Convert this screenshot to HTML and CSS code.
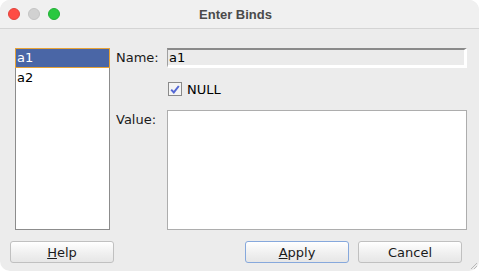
FILE: index.html
```html
<!DOCTYPE html>
<html>
    <head>
        <title>Enter Binds</title>
        <link rel="stylesheet" href="styles.css">
    </head>

    <body>

        <div class="window">

            <div class="titlebar">
                <div class="lights">
                    <span class="light red"></span>
                    <span class="light gray"></span>
                    <span class="light green"></span>
                </div>
                <div class="title">Enter Binds</div>
            </div>

            <div class="content">

                <div class="bind_list">
                    <div class="bind_item selected">a1</div>
                    <div class="bind_item">a2</div>
                </div>

                <div class="bind_form">

                    <label class="form_label name_label" for="name_input">Name:</label>
                    <div class="name_field" id="name_input">a1</div>

                    <div></div>
                    <div class="null_row">
                        <span class="checkbox">
                            <svg width="10" height="9" viewBox="0 0 10 9"><path d="M1.2 4.6 L3.8 7.4 L8.8 1" fill="none" stroke="#5468d4" stroke-width="2"/></svg>
                        </span>
                        <span class="null_text">NULL</span>
                    </div>

                    <label class="form_label value_label" for="value_input">Value:</label>
                    <div class="value_field" id="value_input"></div>

                </div>

            </div>

            <div class="buttons">
                <button type="button" class="btn"><u>H</u>elp</button>
                <div class="spacer"></div>
                <button type="button" class="btn default"><u>A</u>pply</button>
                <button type="button" class="btn">Cancel</button>
            </div>

            <svg class="grip" width="10" height="10" viewBox="0 0 10 10"><path d="M9 3 L3 9 M9 6 L6 9" stroke="#b8b8b8" stroke-width="1"/></svg>

        </div>

    </body>
</html>
```

FILE: styles.css
```css
html, body {
    margin: 0;
    padding: 0;
    background-color: #ffffff;
}

.window {
    position: relative;
    width: 479px;
    height: 271px;
    background-color: #ececec;
    border-radius: 10px;
    overflow: hidden;
    display: flex;
    flex-direction: column;
    font-family: "DejaVu Sans", sans-serif;
    font-size: 13px;
    color: #1a1a1a;
}

.titlebar {
    height: 28px;
    background-color: #f0f0f0;
    border-bottom: 1px solid #d4d4d4;
    display: flex;
    align-items: center;
    position: relative;
}

.lights {
    display: flex;
    gap: 8px;
    padding-left: 8px;
}

.light {
    width: 12px;
    height: 12px;
    border-radius: 50%;
    box-sizing: border-box;
}

.red {
    background-color: #fe4c44;
    border: 1px solid #e0443c;
}

.gray {
    background-color: #d1d1d1;
    border: 1px solid #c4c4c4;
}

.green {
    background-color: #29c840;
    border: 1px solid #22b035;
}

.title {
    flex: 1;
    text-align: center;
    margin-right: 68px;
    font-family: "Liberation Sans", Arial, sans-serif;
    font-weight: bold;
    font-size: 13px;
    color: #4a4a4a;
}

.content {
    display: flex;
    padding: 19px 12px 0 15px;
}

.bind_list {
    width: 95px;
    height: 182px;
    box-sizing: border-box;
    background-color: #ffffff;
    border: 1px solid #8c8c8c;
    margin-right: 6px;
}

.bind_item {
    height: 19px;
    line-height: 19px;
    padding-left: 1px;
    color: #000000;
}

.bind_item.selected {
    height: 18px;
    line-height: 18px;
    background-color: #4a66a6;
    color: #ffffff;
    border: 1px solid #e6a236;
    margin: -1px -1px 0 -1px;
    padding-left: 1px;
}

.bind_form {
    flex: 1;
    display: grid;
    grid-template-columns: 51px 1fr;
    grid-template-rows: 20px 29px 120px;
    row-gap: 0;
    align-content: start;
}

.form_label {
    color: #1a1a1a;
}

.name_label {
    line-height: 20px;
}

.name_field {
    height: 20px;
    box-sizing: border-box;
    border-top: 2px solid #8a8a8a;
    border-left: 1px solid #a0a0a0;
    border-right: 3px solid #ffffff;
    border-bottom: 3px solid #ffffff;
    background-color: #ebebeb;
    padding-left: 1px;
    line-height: 15px;
    color: #000000;
}

.null_row {
    display: flex;
    align-items: center;
    padding-top: 13px;
    padding-left: 1px;
    height: 16px;
}

.checkbox {
    width: 14px;
    height: 14px;
    box-sizing: border-box;
    border: 1px solid #8a8a8a;
    background-color: #f4f4f4;
    display: flex;
    align-items: center;
    justify-content: center;
    margin-right: 5px;
}

.null_text {
    color: #000000;
}

.value_label {
    padding-top: 2px;
    margin-top: 13px;
}

.value_field {
    margin-top: 13px;
    width: 300px;
    height: 120px;
    box-sizing: border-box;
    background-color: #ffffff;
    border: 1px solid #adadad;
}

.buttons {
    display: flex;
    padding: 11px 17px 0 10px;
    gap: 9px;
}

.spacer {
    flex: 1;
}

.btn {
    width: 104px;
    height: 22px;
    box-sizing: border-box;
    border: 1px solid #c0c0c0;
    border-radius: 3px;
    background: linear-gradient(#ffffff, #f1f1f1 50%, #e6e6e6);
    font-family: "DejaVu Sans", sans-serif;
    font-size: 13px;
    color: #1a1a1a;
    padding: 0;
}

.btn.default {
    border-color: #86a8dc;
}

.grip {
    position: absolute;
    right: 1px;
    bottom: 1px;
}
```
